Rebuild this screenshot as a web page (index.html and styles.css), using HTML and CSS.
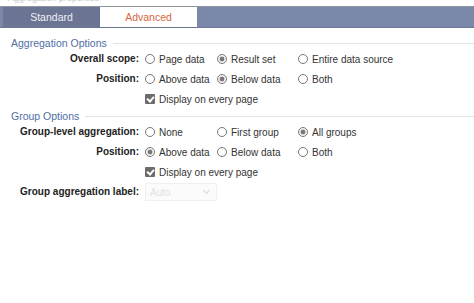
FILE: index.html
```html
<html>
    <head>
        <title>Aggregation properties</title>
        <link rel="stylesheet" href="styles.css">
    </head>
    <body>
        <div class="pageTitle"><span>Aggregation properties</span></div>
        <div class="tabBar">
            <div class="tab">Standard</div>
            <div class="tab active">Advanced</div>
        </div>

        <div class="section">
            <div class="legend"><span>Aggregation Options</span></div>
            <div class="optGrid">
                <div class="label">Overall scope:</div>
                <div class="opt"><span class="radio"></span>Page data</div>
                <div class="opt"><span class="radio on"></span>Result set</div>
                <div class="opt"><span class="radio"></span>Entire data source</div>

                <div class="label">Position:</div>
                <div class="opt"><span class="radio"></span>Above data</div>
                <div class="opt"><span class="radio on"></span>Below data</div>
                <div class="opt"><span class="radio"></span>Both</div>

                <div class="label"></div>
                <div class="opt wide"><span class="check"></span>Display on every page</div>
            </div>
        </div>

        <div class="section second">
            <div class="legend"><span>Group Options</span></div>
            <div class="optGrid">
                <div class="label">Group-level aggregation:</div>
                <div class="opt"><span class="radio"></span>None</div>
                <div class="opt"><span class="radio"></span>First group</div>
                <div class="opt"><span class="radio on"></span>All groups</div>

                <div class="label">Position:</div>
                <div class="opt"><span class="radio on"></span>Above data</div>
                <div class="opt"><span class="radio"></span>Below data</div>
                <div class="opt"><span class="radio"></span>Both</div>

                <div class="label"></div>
                <div class="opt wide"><span class="check"></span>Display on every page</div>

                <div class="label">Group aggregation label:</div>
                <div class="opt wide">
                    <div class="select">Auto<span class="caret"></span></div>
                </div>
            </div>
        </div>
    </body>
</html>
```

FILE: styles.css
```css
body
{
    margin: 0;
    padding: 0;
    font-family: "Liberation Sans", Arial, sans-serif;
    font-size: 10px;
    color: #333;
    background: #fff;
}
.pageTitle
{
    height: 6px;
    overflow: hidden;
    padding-left: 8px;
    color: #c8c8c8;
    font-size: 9px;
}
.pageTitle span
{
    display: block;
    line-height: 10px;
    margin-top: -7px;
}
.tabBar
{
    display: flex;
    height: 20px;
    padding-left: 3px;
    background-color: #7c88aa;
    border-top: 1px solid #8e969d;
    border-bottom: 1px solid #6d7893;
}
.tab
{
    width: 97px;
    line-height: 20px;
    text-align: center;
    font-size: 10.5px;
    color: #eef0f6;
    background-color: #6b7492;
}
.tab.active
{
    background-color: #fff;
    color: #d9663f;
}
.section
{
    padding-top: 8px;
}
.section.second
{
    padding-top: 0;
}
.legend
{
    display: flex;
    align-items: center;
    padding-left: 11px;
    color: #4f6ea5;
    font-size: 10.5px;
    line-height: 14px;
}
.legend::after
{
    content: "";
    flex: 1;
    height: 1px;
    margin-left: 6px;
    background-color: #e3e3e3;
}
.optGrid
{
    display: grid;
    grid-template-columns: 145px 72px 81px auto;
    grid-auto-rows: 20px;
    margin-top: -1px;
}
.label
{
    text-align: right;
    font-weight: bold;
    padding-right: 6px;
    line-height: 20px;
    color: #222;
}
.opt
{
    display: flex;
    align-items: center;
    color: #333;
}
.opt.wide
{
    grid-column: 2 / 5;
}
.radio
{
    display: inline-block;
    box-sizing: border-box;
    width: 10px;
    height: 10px;
    margin-right: 4px;
    border: 1px solid #777;
    border-radius: 50%;
    background: #fff;
}
.radio.on
{
    background: radial-gradient(circle, #777 0, #777 2px, #ddd 2.6px, #fff 4px);
}
.check
{
    display: inline-block;
    box-sizing: border-box;
    width: 10px;
    height: 10px;
    margin-right: 4px;
    border-radius: 1px;
    background-color: #6b6b6b;
    position: relative;
}
.check::after
{
    content: "";
    position: absolute;
    left: 3px;
    top: 1px;
    width: 3px;
    height: 5px;
    border: solid #fff;
    border-width: 0 2px 2px 0;
    transform: rotate(40deg);
}
.select
{
    box-sizing: border-box;
    width: 72px;
    height: 18px;
    padding-left: 4px;
    display: flex;
    align-items: center;
    justify-content: space-between;
    border: 1px solid #f0f0f0;
    color: #e2e2e2;
    background-color: #fbfbfb;
}
.caret
{
    width: 4px;
    height: 4px;
    margin: 0 7px 3px 0;
    border: solid #d8d8d8;
    border-width: 0 1px 1px 0;
    transform: rotate(45deg);
}
```
